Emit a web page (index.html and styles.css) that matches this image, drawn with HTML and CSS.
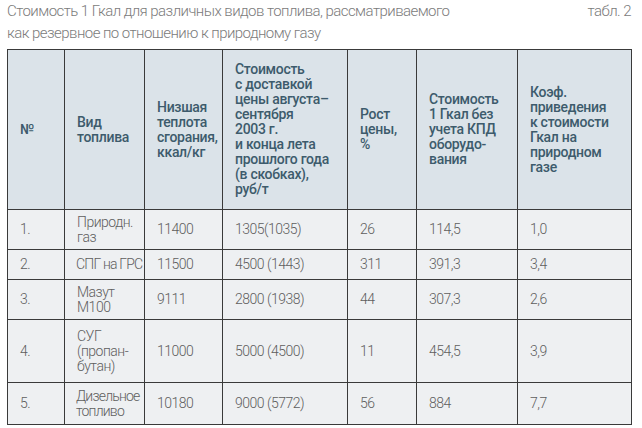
FILE: index.html
```html
<!DOCTYPE html>
<html lang="ru">
<head>
<meta charset="utf-8">
<link rel="stylesheet" href="styles.css">
</head>
<body>
<div class="page">
  <div class="caption">
    <div class="title">Стоимость 1 Гкал для различных видов топлива, рассматриваемого<br>как резервное по отношению к природному газу</div>
    <div class="tabl">табл. 2</div>
  </div>
  <table class="grid">
    <colgroup>
      <col class="c1"><col class="c2"><col class="c3"><col class="c4"><col class="c5"><col class="c6"><col class="c7">
    </colgroup>
    <thead>
      <tr class="head">
        <th>№</th>
        <th>Вид<br>топлива</th>
        <th>Низшая<br>теплота<br>сгорания,<br>ккал/кг</th>
        <th>Стоимость<br>с доставкой<br>цены августа–<br>сентября<br>2003 г.<br>и конца лета<br>прошлого года<br>(в скобках),<br>руб/т</th>
        <th>Рост<br>цены,<br>%</th>
        <th>Стоимость<br>1 Гкал без<br>учета КПД<br>оборудо-<br>вания</th>
        <th>Коэф.<br>приведения<br>к стоимости<br>Гкал на<br>природном<br>газе</th>
      </tr>
    </thead>
    <tbody>
      <tr class="r1"><td>1.</td><td>Природн.<br>газ</td><td>11400</td><td>1305(1035)</td><td>26</td><td>114,5</td><td>1,0</td></tr>
      <tr class="r2"><td>2.</td><td class="tight">СПГ на ГРС</td><td>11500</td><td>4500 (1443)</td><td>311</td><td>391,3</td><td>3,4</td></tr>
      <tr class="r3"><td>3.</td><td>Мазут<br>М100</td><td>9111</td><td>2800 (1938)</td><td>44</td><td>307,3</td><td>2,6</td></tr>
      <tr class="r4"><td>4.</td><td>СУГ<br>(пропан-<br>бутан)</td><td>11000</td><td>5000 (4500)</td><td>11</td><td>454,5</td><td>3,9</td></tr>
      <tr class="r5"><td>5.</td><td class="tight">Дизельное<br>топливо</td><td>10180</td><td>9000 (5772)</td><td>56</td><td>884</td><td>7,7</td></tr>
    </tbody>
  </table>
</div>
</body>
</html>
```
FILE: styles.css
```css
html, body {
  margin: 0;
  padding: 0;
  background: #ffffff;
}
.page {
  padding: 0 11px 0 7px;
  font-family: Roboto, "Liberation Sans", sans-serif;
}
.caption {
  display: flex;
  justify-content: space-between;
  align-items: flex-start;
  height: 49px;
  color: #7b7b7b;
  font-size: 15px;
  font-weight: 300;
  line-height: 22px;
  letter-spacing: -0.55px;
}
.grid {
  border-collapse: collapse;
  table-layout: fixed;
  width: 624px;
}
.c1 { width: 57px; }
.c2 { width: 80px; }
.c3 { width: 78px; }
.c4 { width: 125px; }
.c5 { width: 69px; }
.c6 { width: 101px; }
.c7 { width: 114px; }
.grid th, .grid td {
  border: 1px solid #3a3a3a;
  text-align: left;
  vertical-align: middle;
  padding: 0 0 0 12px;
  white-space: nowrap;
}
.head th {
  background: #dbe3e9;
  color: #3d5b6c;
  font-weight: 500;
  font-size: 14px;
  line-height: 15px;
  letter-spacing: -0.3px;
  height: 159px;
}
.grid td {
  background: #eef0f2;
  color: #5e5e5e;
  font-weight: 300;
  font-size: 14px;
  line-height: 15px;
  letter-spacing: -0.5px;
}
.grid td.tight {
  padding-left: 11px;
  letter-spacing: -0.8px;
}
.r1 td { height: 39px; }
.r2 td { height: 29px; }
.r3 td { height: 39px; }
.r4 td { height: 62px; }
.r5 td { height: 41px; }
```
